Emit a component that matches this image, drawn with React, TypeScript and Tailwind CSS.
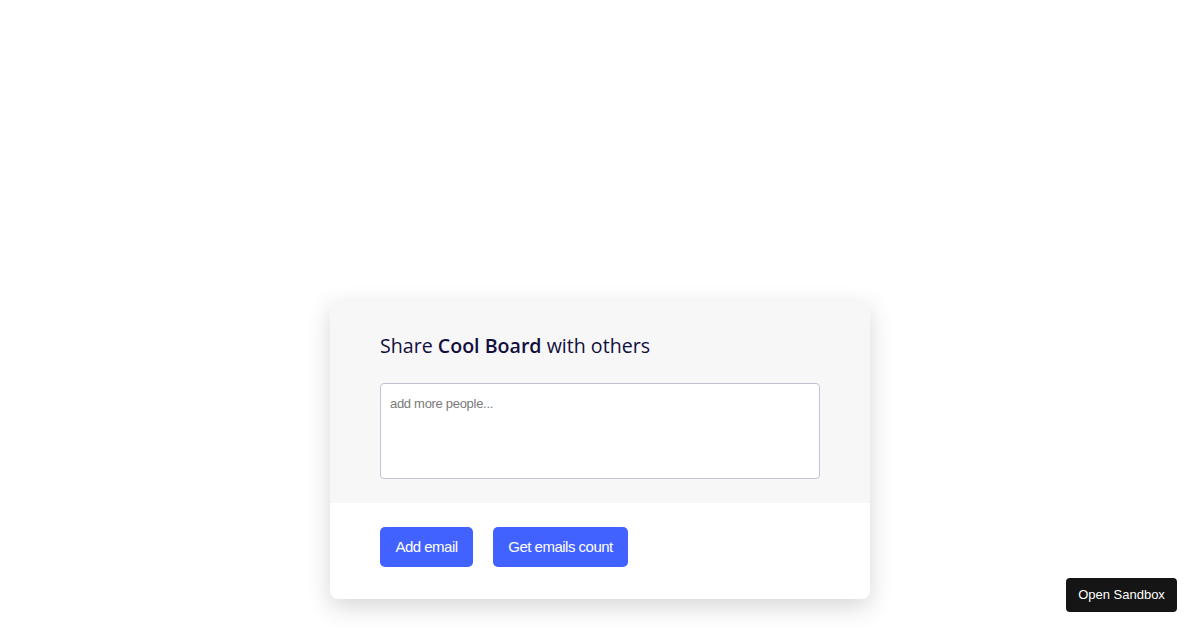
import React, { useState } from "react";

const ShareCard: React.FC = () => {
  const [emails, setEmails] = useState("");

  return (
    <div className="w-[540px] rounded-lg bg-white overflow-hidden shadow-[0_8px_24px_rgba(0,0,0,0.16)]">
      {/* ---- top ---- */}
      <div className="bg-[#f7f7f7] px-[50px] pt-8 pb-6">
        <h2 className="font-['Open_Sans',sans-serif] text-[19.6px] leading-[27px] text-[#120e3d]">
          Share <span className="font-semibold">Cool Board</span> with others
        </h2>
        <textarea
          value={emails}
          onChange={(e) => setEmails(e.target.value)}
          placeholder="add more people..."
          className="mt-6 block w-full h-24 resize-none rounded border border-[#c3c1d4] bg-white px-[9px] py-[10px] font-['Liberation_Sans',sans-serif] text-[13px] tracking-[-0.3px] text-[#333] placeholder:text-[#7a7a7a] outline-none"
        />
      </div>

      {/* ---- actions ---- */}
      <div className="flex gap-5 px-[50px] pt-6 pb-8 font-['Liberation_Sans',sans-serif]">
        <button className="h-10 w-[93px] rounded-[5px] bg-[#4262ff] text-[15px] tracking-[-0.5px] text-white">
          Add email
        </button>
        <button className="h-10 w-[135px] rounded-[5px] bg-[#4262ff] text-[15px] tracking-[-0.5px] text-white">
          Get emails count
        </button>
      </div>
    </div>
  );
};

const App: React.FC = () => {
  return (
    <div className="relative min-h-[630px] bg-white">
      <div className="flex justify-center pt-[300px]">
        <ShareCard />
      </div>

      {/* sandbox button overlay */}
      <button className="absolute right-[23px] bottom-[18px] h-[34px] w-[111px] rounded bg-[#151515] font-['Liberation_Sans',sans-serif] text-[13px] text-white">
        Open Sandbox
      </button>
    </div>
  );
};

export default App;
